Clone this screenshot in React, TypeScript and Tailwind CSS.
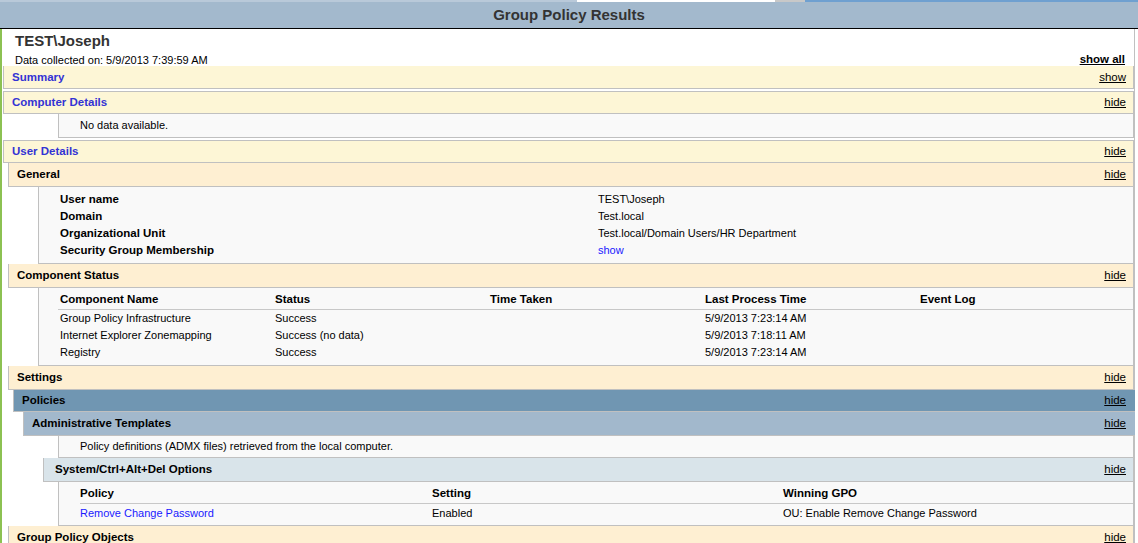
import React from 'react';

type Tone = 'gold' | 'tan' | 'steel' | 'slate' | 'mist';

const toneClass: Record<Tone, string> = {
  gold: 'bg-[#fdf6d6]',
  tan: 'bg-[#feefd2]',
  steel: 'bg-[#7096b2]',
  slate: 'bg-[#a2b8cc]',
  mist: 'bg-[#d9e4ea]',
};

function Bar({
  title,
  action = 'hide',
  tone,
  className = '',
  titleClass = 'text-black',
  padLeft = 'pl-[8px]',
  padRight = 'pr-[7px]',
}: {
  title: string;
  action?: string;
  tone: Tone;
  className?: string;
  titleClass?: string;
  padLeft?: string;
  padRight?: string;
}) {
  return (
    <div
      className={`flex items-center justify-between border-[#c0c0c0] pt-[1px] ${padRight} ${padLeft} ${toneClass[tone]} ${className}`}
    >
      <span className={`text-[11.5px] font-bold ${titleClass}`}>{title}</span>
      <a href="#" className="text-[11.5px] text-black underline">
        {action}
      </a>
    </div>
  );
}

const generalRows: [string, string, boolean?][] = [
  ['User name', 'TEST\\Joseph'],
  ['Domain', 'Test.local'],
  ['Organizational Unit', 'Test.local/Domain Users/HR Department'],
  ['Security Group Membership', 'show', true],
];

const componentRows = [
  ['Group Policy Infrastructure', 'Success', '', '5/9/2013 7:23:14 AM', ''],
  ['Internet Explorer Zonemapping', 'Success (no data)', '', '5/9/2013 7:18:11 AM', ''],
  ['Registry', 'Success', '', '5/9/2013 7:23:14 AM', ''],
];

const componentHeads = ['Component Name', 'Status', 'Time Taken', 'Last Process Time', 'Event Log'];

export default function App() {
  return (
    <div className="w-[1138px] h-[543px] overflow-hidden bg-white font-['Liberation_Sans',Arial,sans-serif] text-black">
      {/* window tab strip */}
      <div className="flex h-[2px]">
        <div className="w-[577px] bg-[#b9c9d9]" />
        <div className="w-[198px] bg-white" />
        <div className="w-[30px] bg-[#c8c8c8]" />
        <div className="flex-1 bg-[#6fa0d0]" />
      </div>

      <div className="flex h-[27px] items-center justify-center border-b border-black bg-[#a3b9cd] text-[15px] font-bold text-[#333]">
        Group Policy Results
      </div>

      <div className="flex h-[514px]">
        <div className="w-[2px] bg-[#8cc152]" />
        <div className="w-[1133px] border-r border-[#c0c0c0]">
          {/* report header */}
          <div className="flex h-[37px] flex-col pt-[3px] pl-[13px] pr-[9px]">
            <div className="h-[18px] text-[15px] font-bold leading-[18px] text-[#333]">TEST\Joseph</div>
            <div className="mt-[4px] flex h-[12px] items-center justify-between">
              <span className="text-[11px]">Data collected on: 5/9/2013 7:39:59 AM</span>
              <a href="#" className="text-[11.5px] font-bold text-black underline">
                show all
              </a>
            </div>
          </div>

          <div className="pl-[1px]">
            <Bar
              title="Summary"
              action="show"
              tone="gold"
              titleClass="text-[#3333d4]"
              className="h-[23px] border-x border-b"
            />

            <Bar
              title="Computer Details"
              tone="gold"
              titleClass="text-[#3333d4]"
              className="mt-[2px] h-[23px] border"
            />
            <div className="ml-[55px] flex h-[24px] items-center border-x border-b border-[#c0c0c0] bg-[#f9f9f9] pl-[21px] text-[11px]">
              No data available.
            </div>

            <Bar
              title="User Details"
              tone="gold"
              titleClass="text-[#3333d4]"
              className="mt-[2px] h-[23px] border"
            />

            <div className="pl-[5px]">
              <Bar title="General" tone="tan" className="h-[24px] border-x border-b" />
              <div className="ml-[30px] h-[77px] border-x border-b border-[#c0c0c0] bg-[#f9f9f9] pt-[4px] pl-[21px]">
                {generalRows.map(([label, value, link]) => (
                  <div key={label} className="grid h-[17px] grid-cols-[538px_1fr] items-center">
                    <span className="text-[11.5px] font-bold">{label}</span>
                    <span className={`text-[11px] ${link ? 'text-[#1a1aff]' : ''}`}>{value}</span>
                  </div>
                ))}
              </div>

              <Bar title="Component Status" tone="tan" className="h-[24px] border-x border-b" />
              <div className="ml-[30px] h-[78px] border-x border-b border-[#c0c0c0] bg-[#f9f9f9] pt-[2px] pl-[19px]">
                <div className="grid h-[20px] grid-cols-[215px_215px_215px_215px_1fr] items-center border-b border-[#c8c8c8]">
                  {componentHeads.map((h) => (
                    <span key={h} className="pl-[2px] text-[11.5px] font-bold">
                      {h}
                    </span>
                  ))}
                </div>
                {componentRows.map((row) => (
                  <div key={row[0]} className="grid h-[17px] grid-cols-[215px_215px_215px_215px_1fr] items-center">
                    {row.map((cell, i) => (
                      <span key={i} className="pl-[2px] text-[11px]">
                        {cell}
                      </span>
                    ))}
                  </div>
                ))}
              </div>

              <Bar title="Settings" tone="tan" className="h-[24px] border-x border-b" />
              <div className="pl-[5px]">
                <Bar
                  title="Policies"
                  tone="steel"
                  padRight="pr-[9px]"
                  className="-mr-[2px] h-[22px] border-x border-b"
                />
                <div className="pl-[10px]">
                  <Bar
                    title="Administrative Templates"
                    tone="slate"
                    padRight="pr-[9px]"
                    className="-mr-[2px] h-[24px] border-x border-b"
                  />
                  <div className="ml-[35px] flex h-[22px] items-center border-x border-b border-[#c0c0c0] bg-[#f9f9f9] pl-[21px] text-[11px]">
                    Policy definitions (ADMX files) retrieved from the local computer.
                  </div>
                  <div className="pl-[20px]">
                    <Bar
                      title="System/Ctrl+Alt+Del Options"
                      tone="mist"
                      padLeft="pl-[11px]"
                      className="h-[24px] border-x border-b"
                    />
                    <div className="ml-[15px] h-[44px] border-x border-b border-[#c0c0c0] bg-[#f9f9f9] pt-[2px] pl-[21px]">
                      <div className="grid h-[20px] grid-cols-[352px_351px_1fr] items-center border-b border-[#c8c8c8]">
                        <span className="text-[11.5px] font-bold">Policy</span>
                        <span className="text-[11.5px] font-bold">Setting</span>
                        <span className="text-[11.5px] font-bold">Winning GPO</span>
                      </div>
                      <div className="grid h-[18px] grid-cols-[352px_351px_1fr] items-center text-[11px]">
                        <a href="#" className="text-[#1a1aff]">
                          Remove Change Password
                        </a>
                        <span>Enabled</span>
                        <span>OU: Enable Remove Change Password</span>
                      </div>
                    </div>
                  </div>
                </div>
              </div>

              <Bar title="Group Policy Objects" tone="tan" className="h-[24px] border-x border-b" />
            </div>
          </div>
        </div>
        <div className="flex-1 bg-white" />
      </div>
    </div>
  );
}
